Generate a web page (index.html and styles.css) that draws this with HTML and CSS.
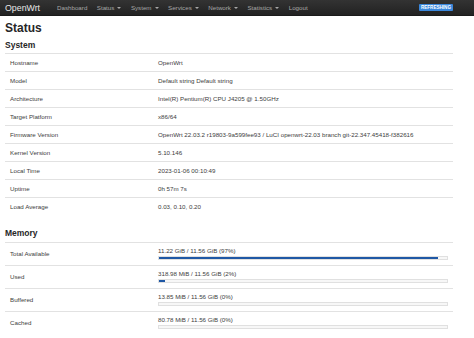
FILE: index.html
```html
<!DOCTYPE html>
<html>
<head lang="en">
    <meta charset="UTF-8">
    <title>OpenWrt - Status</title>
    <link rel="stylesheet" href="styles.css">
</head>
<body>
<header class="navbar">
    <div class="navbar_inner">
        <a class="brand" href="#">OpenWrt</a>
        <ul class="nav">
            <li><a href="#">Dashboard</a></li>
            <li><a href="#" class="dropdown">Status</a></li>
            <li><a href="#" class="dropdown">System</a></li>
            <li><a href="#" class="dropdown">Services</a></li>
            <li><a href="#" class="dropdown">Network</a></li>
            <li><a href="#" class="dropdown">Statistics</a></li>
            <li><a href="#">Logout</a></li>
        </ul>
        <span class="badge">REFRESHING</span>
    </div>
</header>

<div class="main">
    <h2 class="page_title">Status</h2>

    <h3 class="section_title">System</h3>
    <table class="info">
        <tr><td class="label">Hostname</td><td>OpenWrt</td></tr>
        <tr><td class="label">Model</td><td>Default string Default string</td></tr>
        <tr><td class="label">Architecture</td><td>Intel(R) Pentium(R) CPU J4205 @ 1.50GHz</td></tr>
        <tr><td class="label">Target Platform</td><td>x86/64</td></tr>
        <tr><td class="label">Firmware Version</td><td>OpenWrt 22.03.2 r19803-9a599fee93 / LuCI openwrt-22.03 branch git-22.347.45418-f382616</td></tr>
        <tr><td class="label">Kernel Version</td><td>5.10.146</td></tr>
        <tr><td class="label">Local Time</td><td>2023-01-06 00:10:49</td></tr>
        <tr><td class="label">Uptime</td><td>0h 57m 7s</td></tr>
        <tr><td class="label">Load Average</td><td>0.03, 0.10, 0.20</td></tr>
    </table>

    <h3 class="section_title memory_title">Memory</h3>
    <table class="info memory">
        <tr>
            <td class="label">Total Available</td>
            <td>
                <div class="bar_text">11.22 GiB / 11.56 GiB (97%)</div>
                <div class="bar"><span class="fill" style="width: 97%"></span></div>
            </td>
        </tr>
        <tr>
            <td class="label">Used</td>
            <td>
                <div class="bar_text">318.98 MiB / 11.56 GiB (2%)</div>
                <div class="bar"><span class="fill" style="width: 2%"></span></div>
            </td>
        </tr>
        <tr>
            <td class="label">Buffered</td>
            <td>
                <div class="bar_text">13.85 MiB / 11.56 GiB (0%)</div>
                <div class="bar"><span class="fill" style="width: 0%"></span></div>
            </td>
        </tr>
        <tr>
            <td class="label">Cached</td>
            <td>
                <div class="bar_text">80.78 MiB / 11.56 GiB (0%)</div>
                <div class="bar"><span class="fill" style="width: 0%"></span></div>
            </td>
        </tr>
    </table>
</div>
</body>
</html>
```
FILE: styles.css
```css
body,div,ul,li,h2,h3,table,td{ margin:0; padding:0;}
ul{ list-style:none;}
a{ text-decoration:none;}

body{
    font-family: "Liberation Sans", Arial, sans-serif;
    font-size: 6.2px;
    color: #404040;
    background-color: #fff;
    overflow: hidden;
}

/* 顶部导航 */
.navbar{
    height: 15px;
    background: linear-gradient(#333333, #222222);
    border-bottom: 1px solid #1a1a1a;
}
.navbar_inner{
    width: 448px;
    height: 15px;
    margin-left: 5px;
    display: flex;
    align-items: center;
}
.brand{
    font-size: 8.8px;
    color: #e8e8e8;
    margin-right: 17px;
}
.nav{
    display: flex;
    gap: 9.5px;
}
.nav a{
    color: #a8a8a8;
    display: flex;
    align-items: center;
}
.nav .dropdown::after{
    content: "";
    margin-left: 3px;
    border-top: 2px solid #a8a8a8;
    border-left: 2px solid transparent;
    border-right: 2px solid transparent;
}
.badge{
    margin-left: auto;
    background-color: #3a87db;
    color: #fff;
    font-size: 4.6px;
    font-weight: bold;
    line-height: 7px;
    padding: 0 2px;
    border-radius: 1px;
}

/* 内容 */
.main{
    width: 448px;
    margin-left: 5px;
}
.page_title{
    font-size: 12px;
    line-height: 14px;
    font-weight: bold;
    color: #262626;
    margin-top: 5px;
}
.section_title{
    font-size: 8.5px;
    line-height: 10px;
    font-weight: bold;
    color: #262626;
    margin-top: 5px;
    margin-bottom: 3px;
}
.memory_title{
    margin-top: 13px;
    margin-bottom: 4px;
}

.info{
    width: 100%;
    border-collapse: collapse;
}
.info td{
    border-top: 1px solid #e2e2e2;
    height: 17px;
    padding: 0 5px;
    vertical-align: middle;
    line-height: 8px;
}
.info td.label{
    width: 138px;
}
.memory td{
    height: 22px;
}
.bar_text{
    line-height: 8px;
    margin-top: -1px;
}
.bar{
    height: 2px;
    border: 1px solid #e0e0e0;
    background-color: #f7f7f7;
    margin-top: 1px;
}
.fill{
    display: block;
    height: 100%;
    background-color: #1f58a5;
}
```
